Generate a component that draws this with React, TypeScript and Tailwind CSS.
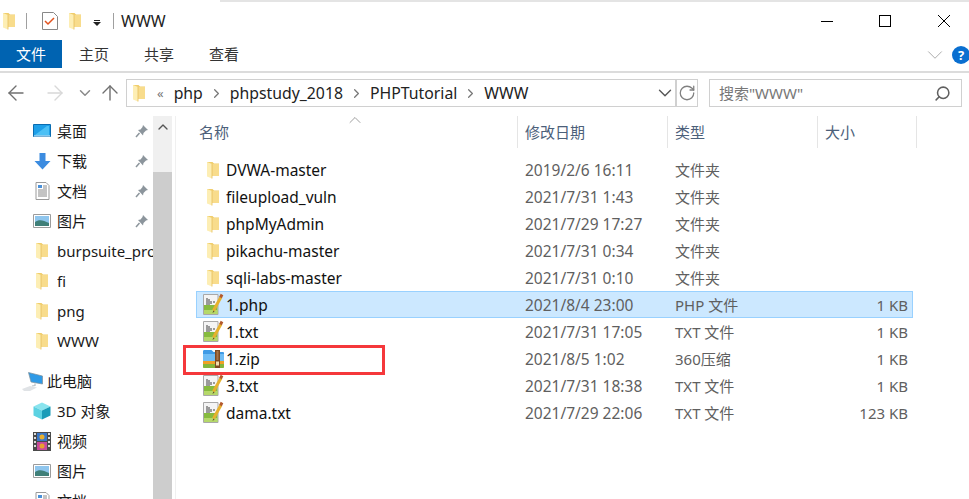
import type { ReactNode } from "react";
import { ArrowLeft, ArrowRight, ArrowUp, ChevronDown, ChevronRight, ChevronUp, RotateCw, Search } from "lucide-react";

const sans = "font-['Noto_Sans','Noto_Sans_CJK_SC',sans-serif]";

const Folder = () => (
  <svg width="14" height="18" viewBox="0 0 14 18" className="shrink-0">
    <path d="M1 1h5.500l1.500 1.500h5V15H1z" fill="#f0cd6c" />
    <path d="M5 3h8v12H5z" fill="#f8dc8c" />
    <path d="M1 1l5 2v14.500l-5-2z" fill="#fdeeb4" />
    <path d="M6 3v14.500" stroke="#e4bd5c" strokeWidth=".8" />
  </svg>
);

const ScriptFile = () => (
  <svg width="21" height="23" viewBox="0 0 21 23" className="shrink-0">
    <path d="M.500 1.500h14.500v20H.500z" fill="#f4f4f4" stroke="#a8a8a8" />
    <path d="M1 12h13.500v9H1z" fill="#86bb3e" />
    <path d="M1 17h13.500v4H1z" fill="#b5d86a" />
    <path d="M4 5v7M6 6v6M8 8v3M10 9h2" stroke="#404040" />
    <path d="M10.500 17.500L18 4" stroke="#e6b12e" strokeWidth="3" />
    <path d="M17.500 4.500l1.500-3" stroke="#b35a2e" strokeWidth="3" />
    <path d="M10.500 17.500l-1 2.500 2-1.500z" fill="#5a4020" />
  </svg>
);

const ZipFile = () => (
  <svg width="21" height="20" viewBox="0 0 21 20" className="shrink-0">
    <path d="M0 2.500C0 1.500 .5 1 1.500 1h7l2 2h9.500c.5 0 1 .5 1 1v8H0z" fill="#3f9be6" />
    <path d="M0 5h21v8H0z" fill="#70bdf5" />
    <path d="M0 12h21v3H0z" fill="#f0a026" />
    <path d="M0 15h21v3c0 .6-.4 1-1 1H1c-.6 0-1-.4-1-1z" fill="#84b63c" />
    <path d="M12 1h5v18h-5z" fill="#7d4a22" />
    <path d="M13.500 2h2v9h-2z" fill="#a8754a" />
    <path d="M13 12.500h3v4h-3z" fill="#f2dcac" />
  </svg>
);

const Pin = () => (
  <svg width="14" height="14" viewBox="0 0 14 14" className="shrink-0">
    <path d="M8 1l5 5-2 .5-2.500 2.500-.5 2.500L3 6l2.500-.5L7.500 3z" fill="#8c959c" />
    <path d="M4.500 9L1 13" stroke="#8c959c" strokeWidth="1.500" />
  </svg>
);

const Desktop = () => (
  <svg width="18" height="14" viewBox="0 0 18 14" className="shrink-0">
    <path d="M.500.500h17v12H.500z" fill="#1e9fe8" stroke="#0a6cb0" />
    <path d="M2 11L14 2h2v9z" fill="#4cc0f5" />
    <path d="M1 12h16" stroke="#e8f4fb" />
  </svg>
);

const Download = () => (
  <svg width="17" height="17" viewBox="0 0 17 17" className="shrink-0">
    <path d="M5.500 0h6v8h5l-8 8.500L.500 8h5z" fill="#3c8ce0" />
  </svg>
);

const Documents = () => (
  <svg width="15" height="18" viewBox="0 0 15 18" className="shrink-0">
    <path d="M1 .500h10l3 3v14H1z" fill="#fff" stroke="#9a9a9a" />
    <path d="M3 3h4v3H3z" fill="#4a90d8" />
    <path d="M8 4h4M8 6h4M3 8h9M3 10h9M3 12h9M3 14h9" stroke="#888" />
  </svg>
);

const Pictures = () => (
  <svg width="18" height="14" viewBox="0 0 18 14" className="shrink-0">
    <path d="M.500.500h17v13H.500z" fill="#fff" stroke="#9c9c9c" />
    <path d="M2 2h14v10H2z" fill="#8fc6ee" />
    <path d="M2 8c4-3 8-2 14 1v3H2z" fill="#3f7f78" />
  </svg>
);

const ThisPc = () => (
  <svg width="21" height="19" viewBox="0 0 21 19" className="shrink-0">
    <path d="M6.500 .500L20.500 4v8L9 10z" fill="#2f9ae6" stroke="#7f8f9a" strokeWidth=".7" />
    <path d="M13 11.500v2l-3 .5" stroke="#b8c0c6" strokeWidth="1.200" fill="none" />
    <path d="M0 17l8-3 7 1.500L8 19H2z" fill="#e0e3e6" />
  </svg>
);

const Objects3d = () => (
  <svg width="18" height="18" viewBox="0 0 18 18" className="shrink-0">
    <path d="M9 .500l8.500 4-8.500 4-8.500-4z" fill="#8ae4ee" />
    <path d="M.500 4.500L9 8.500v9l-8.500-4z" fill="#5cd2e2" />
    <path d="M17.500 4.500L9 8.500v9l8.500-4z" fill="#1a9cb8" />
  </svg>
);

const Video = () => (
  <svg width="18" height="19" viewBox="0 0 18 19" className="shrink-0">
    <path d="M0 0h18v19H0z" fill="#4a4a4a" />
    <path d="M1 1h2v2H1zM1 5h2v2H1zM1 9h2v2H1zM1 13h2v2H1zM15 1h2v2h-2zM15 5h2v2h-2zM15 9h2v2h-2zM15 13h2v2h-2z" fill="#ddd" />
    <path d="M4 1h10v8H4z" fill="#3a78c8" />
    <path d="M4 10h10v8H4z" fill="#c84a9a" />
    <circle cx="9" cy="5" r="2.500" fill="#e8b030" />
    <circle cx="9" cy="14" r="2.500" fill="#e8a030" />
  </svg>
);

const quickAccess = [
  { label: "桌面", icon: <Desktop />, pin: true },
  { label: "下载", icon: <Download />, pin: true },
  { label: "文档", icon: <Documents />, pin: true },
  { label: "图片", icon: <Pictures />, pin: true },
  { label: "burpsuite_pro_v", icon: <Folder /> },
  { label: "fi", icon: <Folder /> },
  { label: "png", icon: <Folder /> },
  { label: "WWW", icon: <Folder /> },
];

const thisPc = [
  { label: "3D 对象", icon: <Objects3d /> },
  { label: "视频", icon: <Video /> },
  { label: "图片", icon: <Pictures /> },
  { label: "文档", icon: <Documents /> },
];

const files = [
  { name: "DVWA-master", date: "2019/2/6 16:11", type: "文件夹", size: "", icon: <Folder /> },
  { name: "fileupload_vuln", date: "2021/7/31 1:43", type: "文件夹", size: "", icon: <Folder /> },
  { name: "phpMyAdmin", date: "2021/7/29 17:27", type: "文件夹", size: "", icon: <Folder /> },
  { name: "pikachu-master", date: "2021/7/31 0:34", type: "文件夹", size: "", icon: <Folder /> },
  { name: "sqli-labs-master", date: "2021/7/31 0:10", type: "文件夹", size: "", icon: <Folder /> },
  { name: "1.php", date: "2021/8/4 23:00", type: "PHP 文件", size: "1 KB", icon: <ScriptFile />, selected: true },
  { name: "1.txt", date: "2021/7/31 17:05", type: "TXT 文件", size: "1 KB", icon: <ScriptFile /> },
  { name: "1.zip", date: "2021/8/5 1:02", type: "360压缩", size: "1 KB", icon: <ZipFile /> },
  { name: "3.txt", date: "2021/7/31 18:38", type: "TXT 文件", size: "1 KB", icon: <ScriptFile /> },
  { name: "dama.txt", date: "2021/7/29 22:06", type: "TXT 文件", size: "123 KB", icon: <ScriptFile /> },
];

const NavRow = ({ label, icon, pin }: { label: string; icon: ReactNode; pin?: boolean }) => (
  <div className="flex h-[30px] items-center">
    <div className="flex w-[57px] shrink-0 justify-end pr-[6px] pl-[33px]">
      <div className="flex w-[18px] justify-center">{icon}</div>
    </div>
    <span className="min-w-0 flex-1 overflow-hidden whitespace-nowrap text-[#1a1a1a]">{label}</span>
    {pin && (
      <div className="flex w-[18px] shrink-0 justify-start">
        <Pin />
      </div>
    )}
  </div>
);

const Crumb = () => <ChevronRight size={15} strokeWidth={2} className="mx-[6px] text-[#777]" />;

export default function App() {
  return (
    <div className={`${sans} flex h-[499px] w-[969px] flex-col overflow-hidden bg-white text-[15px] leading-[20px]`}>
      <div className="ml-[220px] h-[2px] shrink-0 bg-[#e4e4e4]" />

      {/* title bar */}
      <div className="flex h-[38px] shrink-0 items-center">
        <div className="flex items-center pl-[2px]">
          <Folder />
          <div className="ml-[10px] h-[16px] w-px bg-[#a0a0a0]" />
          <svg width="16" height="18" viewBox="0 0 16 18" className="ml-[15px]">
            <path d="M.500.500h11l4 4v13H.500z" fill="#fff" stroke="#888" />
            <path d="M3 9l3 3 6-6" fill="none" stroke="#e2531f" strokeWidth="1.500" />
          </svg>
          <div className="ml-[10px]">
            <Folder />
          </div>
          <svg width="8" height="6" viewBox="0 0 8 6" className="ml-[11px] mt-[3px]">
            <path d="M1 0h6v1H1zM0 2h8L4 6z" fill="#222" />
          </svg>
          <div className="ml-[12px] h-[16px] w-px bg-[#a0a0a0]" />
          <span className="ml-[7px] text-[16px] text-[#222]">WWW</span>
        </div>
        <div className="ml-auto flex items-center pr-[19px]">
          <div className="h-px w-[12px] bg-black" />
          <div className="ml-[46px] h-[12px] w-[12px] border border-black" />
          <svg width="12" height="12" viewBox="0 0 12 12" className="ml-[47px]">
            <path d="M0 0l12 12M12 0L0 12" stroke="#000" strokeWidth="1" />
          </svg>
        </div>
      </div>

      {/* ribbon tabs */}
      <div className="flex h-[33px] shrink-0 items-start border-b-2 border-[#dcdcdc]">
        <div className="flex h-[28px] w-[62px] items-center justify-center bg-[#0063b1] text-white">文件</div>
        <div className="flex h-[28px] items-center pl-[17px] text-[#333]">
          <span className="w-[65px]">主页</span>
          <span className="w-[65px]">共享</span>
          <span>查看</span>
        </div>
        <div className="ml-auto flex h-[30px] items-center">
          <ChevronDown size={26} strokeWidth={0.8} className="text-[#a0a0a0]" />
          <div className="-mr-px ml-[4px] flex h-[18px] w-[18px] items-center justify-center rounded-full bg-[#0a6fd0] text-[13px] font-bold text-white">?</div>
        </div>
      </div>

      {/* address row */}
      <div className="flex h-[43px] shrink-0 items-center pb-[3px] pl-[4px]">
        <ArrowLeft size={24} strokeWidth={1.400} className="text-[#707070]" />
        <ArrowRight size={24} strokeWidth={1.400} className="ml-[15px] text-[#d8d8d8]" />
        <ChevronDown size={18} strokeWidth={2} className="ml-[9px] text-[#8a8a8a]" />
        <ArrowUp size={24} strokeWidth={1.400} className="ml-[4px] text-[#707070]" />
        <div className="ml-[4px] flex h-[28px] w-[550px] items-center border border-[#d0d0d0] pl-[5px] text-[15.800px] text-[#222]">
          <Folder />
          <span className="ml-[11px] text-[13px] text-[#777]">«</span>
          <span className="ml-[10px]">php</span>
          <Crumb />
          <span>phpstudy_2018</span>
          <Crumb />
          <span>PHPTutorial</span>
          <Crumb />
          <span>WWW</span>
          <ChevronDown size={22} strokeWidth={1.500} className="-mr-[1px] ml-auto text-[#555]" />
        </div>
        <div className="flex h-[28px] w-[22px] items-center justify-center border border-[#d0d0d0]">
          <RotateCw size={18} strokeWidth={1.700} className="text-[#808080]" />
        </div>
        <div className="ml-[11px] flex h-[28px] w-[253px] items-center justify-between border border-[#d0d0d0] pl-[9px] pr-[10px] text-[#777]">
          <span>搜索"WWW"</span>
          <Search size={17} strokeWidth={2.200} className="-scale-x-100 text-[#606060]" />
        </div>
      </div>

      {/* body */}
      <div className="flex min-h-0 flex-1 overflow-hidden">
        <div className="w-[153px] shrink-0 overflow-hidden">
          {quickAccess.map((item) => (
            <NavRow key={item.label} {...item} />
          ))}
          <div className="mt-[10px] flex h-[30px] items-center pl-[22px]">
            <div className="w-[25px]">
              <ThisPc />
            </div>
            <span className="text-[#1a1a1a]">此电脑</span>
          </div>
          {thisPc.map((item) => (
            <NavRow key={item.label} {...item} />
          ))}
        </div>

        {/* scrollbar */}
        <div className="flex w-[19px] shrink-0 flex-col bg-[#f0f0f0]">
          <div className="flex h-[56px] items-start justify-center pt-[3px]">
            <ChevronUp size={16} strokeWidth={2} className="text-[#555]" />
          </div>
          <div className="flex-1 bg-[#cdcdcd]" />
        </div>
        <div className="ml-[3px] w-px shrink-0 bg-[#f0f0f0]" />

        {/* file list */}
        <div className="relative min-w-0 flex-1">
          <div className="flex h-[32px] items-center pl-[23px] text-[#4c607a]">
            <span className="w-[318px]">名称</span>
            <span className="w-[150px] border-l border-[#e5e5e5] pl-[7px] leading-[32px]">修改日期</span>
            <span className="w-[150px] border-l border-[#e5e5e5] pl-[7px] leading-[32px]">类型</span>
            <span className="w-[100px] border-x border-[#e5e5e5] pl-[7px] leading-[32px]">大小</span>
          </div>
          <ChevronUp size={20} strokeWidth={0.9} className="absolute left-[169px] top-[-6px] text-[#808080]" />
          <div className="ml-[20px] mt-[8px] w-[717px]">
            {files.map((file) => (
              <div
                key={file.name}
                className={`flex h-[27px] items-center border ${file.selected ? "border-[#99d1ff] bg-[#cce8ff]" : "border-transparent"}`}
              >
                <div className="flex w-[29px] shrink-0 justify-center pl-[3px]">{file.icon}</div>
                <span className="w-[299px] text-[15.500px] text-[#111]">{file.name}</span>
                <span className="w-[150px] text-[15.500px] text-[#5f5f5f]">{file.date}</span>
                <span className="w-[121px] text-[#5f5f5f]">{file.type}</span>
                <span className="w-[112px] text-right text-[#5f5f5f]">{file.size}</span>
              </div>
            ))}
          </div>
          <div className="absolute left-[7px] top-[229px] h-[30px] w-[202px] border-[3px] border-[#f5383b]" />
        </div>
      </div>
    </div>
  );
}
